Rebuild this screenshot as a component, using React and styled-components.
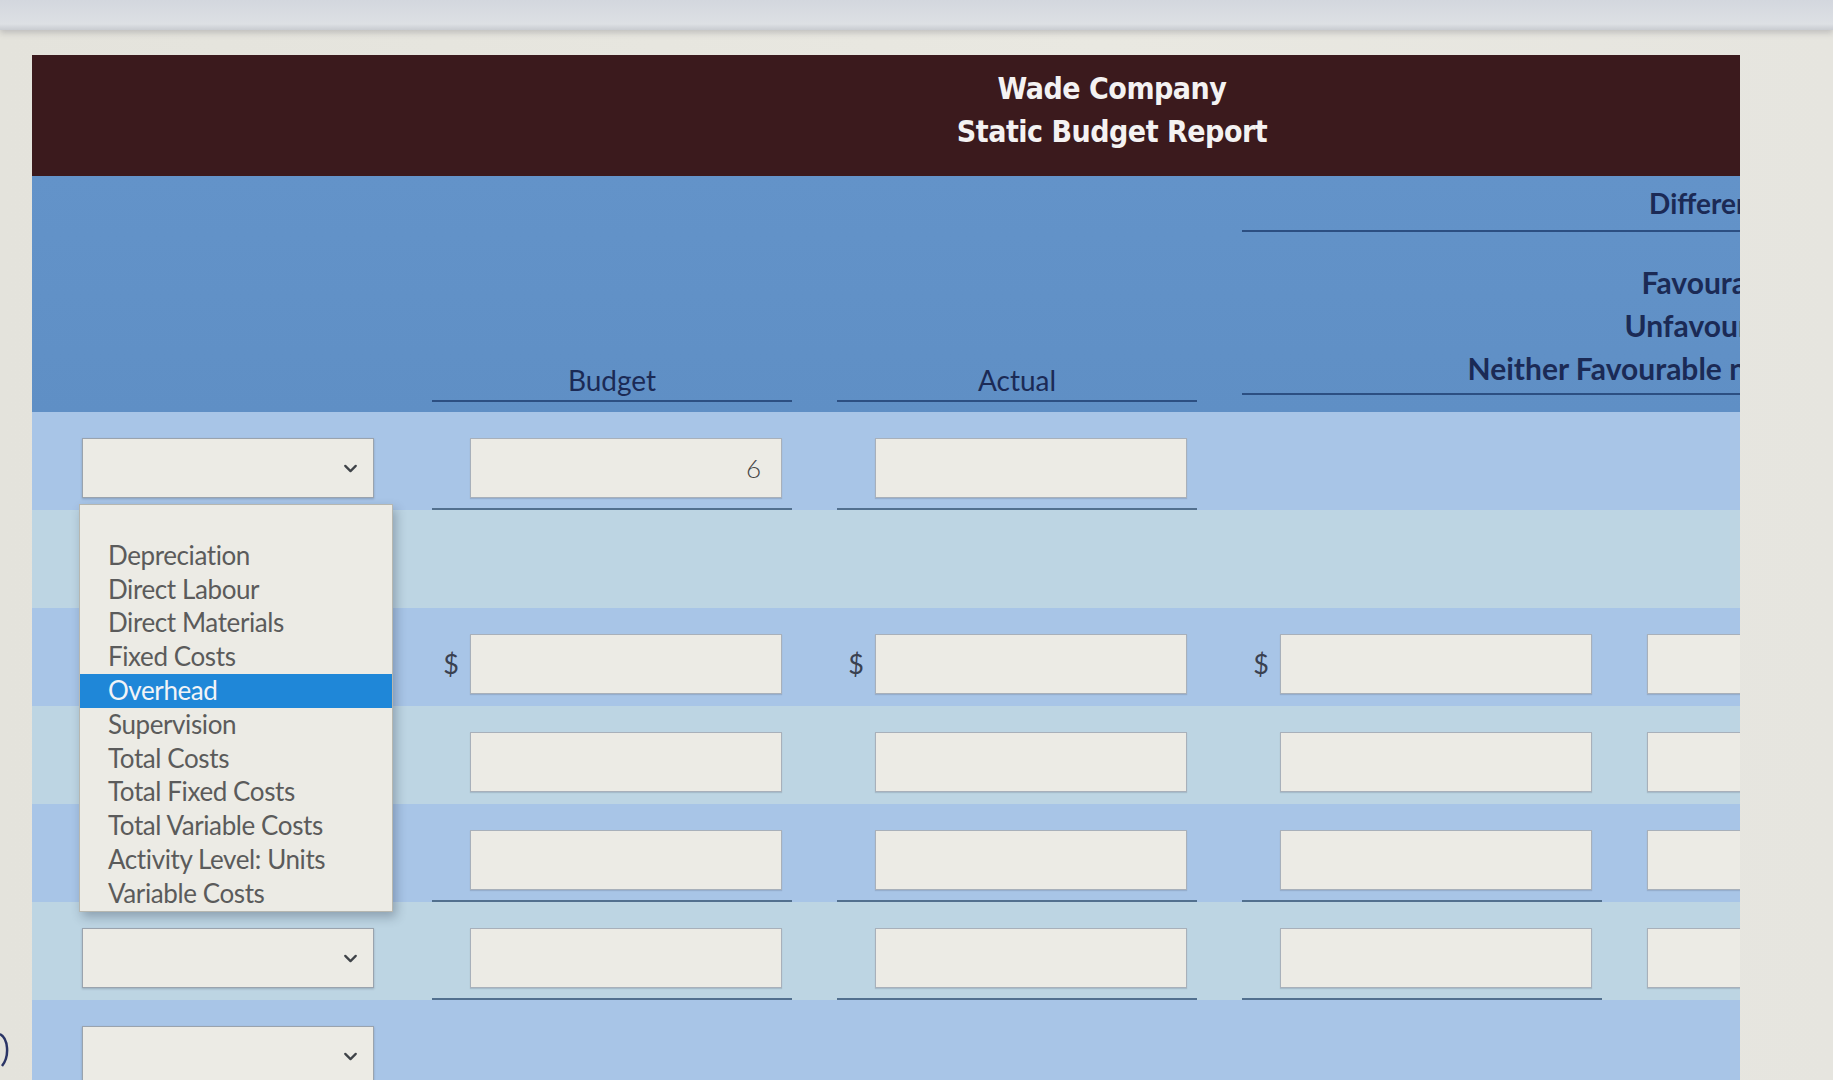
import React from 'react';
import styled, { createGlobalStyle } from 'styled-components';
import { ChevronDown } from 'lucide-react';

const GlobalStyle = createGlobalStyle`
  html, body {
    margin: 0;
    padding: 0;
    height: 1080px;
    overflow: hidden;
    background: #e7e6df;
    font-family: Lato, "Open Sans", sans-serif;
  }
`;

const COLS = '355px 360px 360px 360px 540px';

const Page = styled.div`
  position: relative;
  height: 1080px;
  display: flex;
  flex-direction: column;
  background: linear-gradient(90deg, #e4e3dc 0%, #e9e8e1 60%, #e6e5df 100%);
`;

const TopStrip = styled.div`
  height: 30px;
  background: linear-gradient(180deg, #d3d7de 0%, #dde0e4 80%, #c9ccd1 100%);
  box-shadow: 0 3px 6px rgba(80, 80, 90, 0.25);
`;

const Screen = styled.div`
  flex: 1;
  display: flex;
  padding: 25px 0 0 32px;
  min-height: 0;
`;

const Sheet = styled.div`
  width: 1708px;
  overflow: hidden;
  display: flex;
  flex-direction: column;
`;

const Inner = styled.div`
  width: 2200px;
  display: flex;
  flex-direction: column;
`;

const TitleBar = styled.div`
  height: 121px;
  box-sizing: border-box;
  padding: 12px 40px 0 0;
  background: #3b1a1d;
  color: #f4f2f2;
  text-align: center;
  font-family: "DejaVu Sans Condensed", "DejaVu Sans", sans-serif;
  font-stretch: condensed;
  font-weight: 700;
  font-size: 30px;
  line-height: 43px;
  letter-spacing: -0.5px;
`;

const HeaderBand = styled.div`
  display: grid;
  grid-template-columns: ${COLS};
  column-gap: 45px;
  height: 236px;
  background: linear-gradient(180deg, #6393c9 0%, #5f8fc5 100%);
  color: #1b2a55;
`;

const ColHead = styled.div`
  align-self: end;
  margin-bottom: 10px;
  padding-bottom: 2px;
  border-bottom: 2px solid #2c4f82;
  text-align: center;
  font-size: 28px;
  line-height: 36px;
`;

const DiffHead = styled.div`
  grid-column: 4 / 6;
  display: flex;
  flex-direction: column;
  padding-top: 9px;
  text-align: center;
  font-weight: 700;
  font-size: 28px;
`;

const DiffTitle = styled.div`
  line-height: 36px;
  padding-bottom: 9px;
  border-bottom: 2px solid #2c4f82;
`;

const DiffOptions = styled.div`
  margin-top: 29px;
  padding-bottom: 3px;
  font-size: 30px;
  line-height: 43px;
  border-bottom: 2px solid #2c4f82;
`;

const Row = styled.div`
  display: grid;
  grid-template-columns: ${COLS};
  column-gap: 45px;
  align-items: start;
  height: 98px;
  box-sizing: border-box;
  padding-top: 26px;
  background: ${(p) => (p.$tone === 'blue' ? '#a8c5e7' : '#bdd5e3')};
`;

const LabelCell = styled.div`
  position: relative;
  padding-left: 50px;
`;

const SelectBox = styled.div`
  width: 292px;
  height: 60px;
  box-sizing: border-box;
  display: flex;
  align-items: center;
  justify-content: flex-end;
  padding-right: 12px;
  background: #ecebe5;
  border: 1px solid #9aa3ad;
  box-shadow: 0 1px 2px rgba(40, 50, 70, 0.25);
  color: #3f4348;
`;

const OptionList = styled.ul`
  position: absolute;
  top: 66px;
  left: 47px;
  width: 312px;
  margin: 0;
  padding: 0;
  list-style: none;
  background: #ecebe5;
  border: 1px solid #b6b7b0;
  box-shadow: 3px 5px 10px rgba(30, 40, 60, 0.3);
  z-index: 5;
`;

const Option = styled.li`
  height: 33.8px;
  line-height: 33.8px;
  padding-left: 28px;
  font-size: 26px;
  letter-spacing: -0.4px;
  color: ${(p) => (p.$active ? '#f2f4f7' : '#5b5b5b')};
  background: ${(p) => (p.$active ? '#1f87d8' : 'transparent')};
`;

const MoneyCell = styled.div`
  display: flex;
  align-items: flex-start;
  height: 72px;
  box-sizing: border-box;
  border-bottom: 2px solid ${(p) => (p.$underline ? '#52708f' : 'transparent')};
`;

const Dollar = styled.span`
  width: 38px;
  height: 60px;
  line-height: 60px;
  text-align: center;
  font-size: 27px;
  color: #3a4150;
`;

const Field = styled.div`
  width: 312px;
  height: 60px;
  box-sizing: border-box;
  margin-left: ${(p) => (p.$flush ? '0' : '38px')};
  padding-right: 20px;
  display: flex;
  align-items: center;
  justify-content: flex-end;
  background: #ecebe5;
  border: 1px solid #a8b0ba;
  box-shadow: 0 1px 1px rgba(40, 50, 70, 0.15);
  font-size: 26px;
  font-weight: 300;
  color: #444;
`;

const Mark = styled.svg`
  position: absolute;
  left: 0;
  top: 1030px;
`;

const options = [
  '',
  'Depreciation',
  'Direct Labour',
  'Direct Materials',
  'Fixed Costs',
  'Overhead',
  'Supervision',
  'Total Costs',
  'Total Fixed Costs',
  'Total Variable Costs',
  'Activity Level: Units',
  'Variable Costs',
];

const rows = [
  { tone: 'blue', kind: 'first', lines: ['budget', 'actual'] },
  { tone: 'pale', kind: 'none', lines: [] },
  { tone: 'blue', kind: 'dollar', lines: [] },
  { tone: 'pale', kind: 'plain', lines: [] },
  { tone: 'blue', kind: 'plain', lines: ['budget', 'actual', 'diff'] },
  { tone: 'pale', kind: 'plain', lines: ['budget', 'actual', 'diff'] },
  { tone: 'blue', kind: 'none', lines: [] },
];

function Money({ show, dollar, value, underline }) {
  return (
    <MoneyCell $underline={underline}>
      {show && dollar && <Dollar>$</Dollar>}
      {show && <Field $flush={dollar}>{value}</Field>}
    </MoneyCell>
  );
}

function BodyRow({ row, index }) {
  const { kind, lines } = row;
  const hasDiff = kind === 'dollar' || kind === 'plain';
  const dollar = kind === 'dollar';
  return (
    <Row $tone={row.tone}>
      <LabelCell>
        <SelectBox>
          <ChevronDown size={21} strokeWidth={2.6} />
        </SelectBox>
        {index === 0 && (
          <OptionList>
            {options.map((o, i) => (
              <Option key={i} $active={o === 'Overhead'}>{o}</Option>
            ))}
          </OptionList>
        )}
      </LabelCell>
      <Money
        show={kind !== 'none'}
        dollar={dollar}
        value={index === 0 ? '6' : ''}
        underline={lines.includes('budget')}
      />
      <Money show={kind !== 'none'} dollar={dollar} underline={lines.includes('actual')} />
      <Money show={hasDiff} dollar={dollar} underline={lines.includes('diff')} />
      <MoneyCell>{hasDiff && <Field $flush>{''}</Field>}</MoneyCell>
    </Row>
  );
}

export default function App() {
  return (
    <>
      <GlobalStyle />
      <Page>
        <TopStrip />
        <Screen>
          <Sheet>
            <Inner>
              <TitleBar>
                <div>Wade Company</div>
                <div>Static Budget Report</div>
              </TitleBar>
              <HeaderBand>
                <div />
                <ColHead>Budget</ColHead>
                <ColHead>Actual</ColHead>
                <DiffHead>
                  <DiffTitle>Difference</DiffTitle>
                  <DiffOptions>
                    <div>Favourable</div>
                    <div>Unfavourable</div>
                    <div>Neither Favourable nor Unfavourable</div>
                  </DiffOptions>
                </DiffHead>
              </HeaderBand>
              {rows.map((r, i) => (
                <BodyRow key={i} row={r} index={i} />
              ))}
            </Inner>
          </Sheet>
        </Screen>
        <Mark width="10" height="40" viewBox="0 0 10 40">
          <path d="M0 4 C8 8 10 26 2 36" fill="none" stroke="#2b3566" strokeWidth="2.5" />
        </Mark>
      </Page>
    </>
  );
}
